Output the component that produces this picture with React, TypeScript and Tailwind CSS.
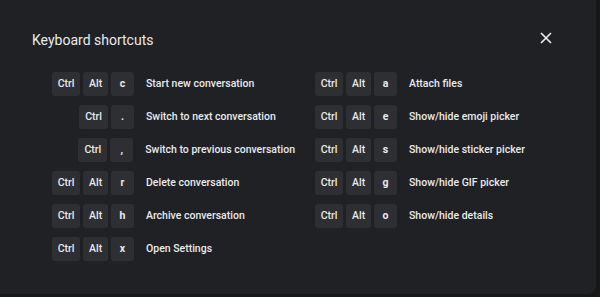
import React from "react";

type Sc = { keys: string[]; label: string };

const left: Sc[] = [
  { keys: ["Ctrl", "Alt", "c"], label: "Start new conversation" },
  { keys: ["Ctrl", "."], label: "Switch to next conversation" },
  { keys: ["Ctrl", ","], label: "Switch to previous conversation" },
  { keys: ["Ctrl", "Alt", "r"], label: "Delete conversation" },
  { keys: ["Ctrl", "Alt", "h"], label: "Archive conversation" },
  { keys: ["Ctrl", "Alt", "x"], label: "Open Settings" },
];

const right: Sc[] = [
  { keys: ["Ctrl", "Alt", "a"], label: "Attach files" },
  { keys: ["Ctrl", "Alt", "e"], label: "Show/hide emoji picker" },
  { keys: ["Ctrl", "Alt", "s"], label: "Show/hide sticker picker" },
  { keys: ["Ctrl", "Alt", "g"], label: "Show/hide GIF picker" },
  { keys: ["Ctrl", "Alt", "o"], label: "Show/hide details" },
];

function Key({ k }: { k: string }) {
  const single = k.length === 1;
  return (
    <div
      className={
        "h-[24px] min-w-[23px] px-[6px] rounded-[3px] bg-[#2e2f32] flex items-center justify-center text-[10.5px] text-[#e8eaed] " +
        (single ? "font-bold" : "font-medium")
      }
    >
      {k}
    </div>
  );
}

function Row({ s }: { s: Sc }) {
  return (
    <div className="flex items-center h-[24px]">
      <div className="w-[82px] flex justify-end gap-[3px]">
        {s.keys.map((k, i) => (
          <Key key={i} k={k} />
        ))}
      </div>
      <div className="ml-[12px] text-[10.5px] text-[#e8eaed] font-medium whitespace-nowrap">
        {s.label}
      </div>
    </div>
  );
}

export default function App() {
  return (
    <div
      className="w-[600px] h-[297px] bg-[#17181a] overflow-hidden"
      style={{ fontFamily: "Roboto, 'Liberation Sans', sans-serif" }}
    >
      <div className="w-[596px] h-[294px] bg-[#202124] rounded-br-[8px] relative">
        <div className="pt-[30px] pl-[32px] h-[72px]">
          <div className="text-[14px] leading-[20px] text-[#e8eaed]">Keyboard shortcuts</div>
        </div>
        <button className="absolute left-[537px] top-[29px] w-[17px] h-[17px] flex items-center justify-center">
          <svg width="12" height="12" viewBox="0 0 12 12">
            <path d="M1 1 L11 11 M11 1 L1 11" stroke="#e8eaed" strokeWidth="1.7" />
          </svg>
        </button>
        <div className="flex pl-[52px] gap-[20px]">
          <div className="w-[243px] flex flex-col gap-[9px]">
            {left.map((s, i) => (
              <Row key={i} s={s} />
            ))}
          </div>
          <div className="flex flex-col gap-[9px]">
            {right.map((s, i) => (
              <Row key={i} s={s} />
            ))}
          </div>
        </div>
      </div>
    </div>
  );
}
